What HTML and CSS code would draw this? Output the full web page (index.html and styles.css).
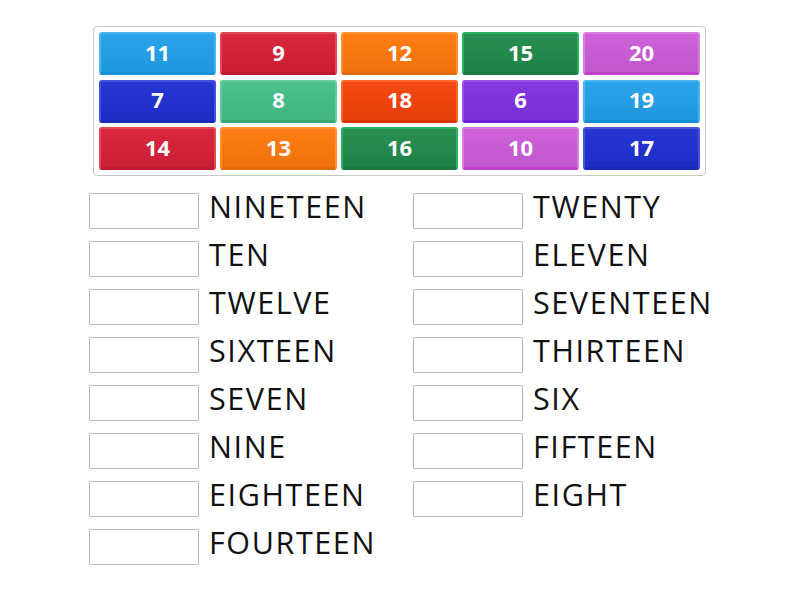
FILE: index.html
```html
<!DOCTYPE html>
<html>
<head>
<meta charset="utf-8">
<link rel="stylesheet" href="styles.css">
</head>
<body>
<div class="page">
  <div class="bank">
    <div class="tile c-sky">11</div>
    <div class="tile c-red">9</div>
    <div class="tile c-orange">12</div>
    <div class="tile c-green">15</div>
    <div class="tile c-pink">20</div>
    <div class="tile c-blue">7</div>
    <div class="tile c-mint">8</div>
    <div class="tile c-fire">18</div>
    <div class="tile c-violet">6</div>
    <div class="tile c-sky">19</div>
    <div class="tile c-red">14</div>
    <div class="tile c-orange">13</div>
    <div class="tile c-green">16</div>
    <div class="tile c-pink">10</div>
    <div class="tile c-blue">17</div>
  </div>
  <div class="answers">
    <div class="col">
      <div class="row"><div class="slot"></div><span class="word">NINETEEN</span></div>
      <div class="row"><div class="slot"></div><span class="word">TEN</span></div>
      <div class="row"><div class="slot"></div><span class="word">TWELVE</span></div>
      <div class="row"><div class="slot"></div><span class="word">SIXTEEN</span></div>
      <div class="row"><div class="slot"></div><span class="word">SEVEN</span></div>
      <div class="row"><div class="slot"></div><span class="word">NINE</span></div>
      <div class="row"><div class="slot"></div><span class="word">EIGHTEEN</span></div>
      <div class="row"><div class="slot"></div><span class="word">FOURTEEN</span></div>
    </div>
    <div class="col">
      <div class="row"><div class="slot"></div><span class="word">TWENTY</span></div>
      <div class="row"><div class="slot"></div><span class="word">ELEVEN</span></div>
      <div class="row"><div class="slot"></div><span class="word">SEVENTEEN</span></div>
      <div class="row"><div class="slot"></div><span class="word">THIRTEEN</span></div>
      <div class="row"><div class="slot"></div><span class="word">SIX</span></div>
      <div class="row"><div class="slot"></div><span class="word">FIFTEEN</span></div>
      <div class="row"><div class="slot"></div><span class="word">EIGHT</span></div>
    </div>
  </div>
</div>
</body>
</html>
```
FILE: styles.css
```css
html, body {
  margin: 0;
  padding: 0;
  background: #ffffff;
}
body {
  font-family: "Open Sans", "Liberation Sans", sans-serif;
}
.page {
  padding-top: 26px;
}
.bank {
  margin-left: 93px;
  width: 601px;
  padding: 5px;
  border: 1px solid #c8c8c8;
  border-radius: 4px;
  display: grid;
  grid-template-columns: repeat(5, 117px);
  grid-auto-rows: 43px;
  column-gap: 4px;
  row-gap: 4.5px;
}
.tile {
  box-sizing: border-box;
  border-radius: 3px;
  border: 2px solid rgba(255,255,255,0.18);
  border-bottom: 3px solid rgba(0,0,0,0.14);
  color: #ffffff;
  font-weight: 700;
  font-size: 22px;
  display: flex;
  align-items: center;
  justify-content: center;
  padding-bottom: 3px;
  background-image: linear-gradient(to bottom, rgba(255,255,255,0.04), rgba(0,0,0,0.06));
}
.c-sky { background-color: #22a0ea; border-color: #48b4f0; border-bottom-color: #168ed6; }
.c-red { background-color: #d81f38; border-color: #e2475c; border-bottom-color: #be1a30; }
.c-orange { background-color: #ff780c; border-color: #ff9030; border-bottom-color: #e36a08; }
.c-green { background-color: #1f8a4b; border-color: #2cb25f; border-bottom-color: #1a7a42; }
.c-pink { background-color: #cc5cd8; border-color: #d77ee0; border-bottom-color: #c040cc; }
.c-blue { background-color: #1f2fd0; border-color: #4452dc; border-bottom-color: #1a28b8; }
.c-mint { background-color: #45bf88; border-color: #62cb9a; border-bottom-color: #38a875; }
.c-fire { background-color: #f4420a; border-color: #ff6630; border-bottom-color: #d83a08; }
.c-violet { background-color: #8030e2; border-color: #9652ea; border-bottom-color: #7020d8; }

.answers {
  margin-top: 17px;
  margin-left: 89px;
  display: grid;
  grid-template-columns: 324px 300px;
}
.col {
  display: flex;
  flex-direction: column;
  gap: 12px;
}
.row {
  display: flex;
  align-items: flex-start;
  height: 36px;
}
.slot {
  box-sizing: border-box;
  width: 110px;
  height: 36px;
  border: 1px solid #b8b8b8;
  border-radius: 1px;
  background: #ffffff;
  flex: none;
}
.word {
  margin-left: 10px;
  font-size: 30.5px;
  letter-spacing: 1.6px;
  line-height: 36px;
  margin-top: -5px;
  color: #111111;
  white-space: nowrap;
}
```
